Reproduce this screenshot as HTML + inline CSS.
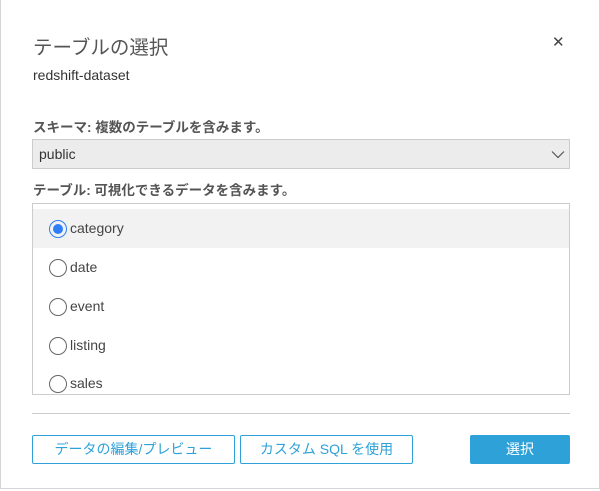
<!DOCTYPE html>
<html><head><meta charset="utf-8"><style>
*{box-sizing:border-box;margin:0;padding:0}
body{width:600px;height:491px;background:#fff;font-family:"Liberation Sans","Noto Sans CJK JP",sans-serif;color:#444;position:relative;overflow:hidden}
.modal{position:absolute;left:0;top:0;width:600px;height:489px;border:1px solid #d5d5d5;border-top:none;background:#fff}
.a{position:absolute}
.title{left:32px;top:31px;font-size:19.5px;color:#555}
.close{left:551px;top:33px;font-size:15px;color:#444}
.sub{left:32px;top:67px;font-size:14px;color:#333}
.lbl{left:32px;font-size:13.5px;font-weight:bold;color:#555}
.sel{left:31px;top:139px;width:538px;height:30px;background:#ececec;border:1px solid #ccc;font-size:14px;color:#333;padding:6px 0 0 6px}
.list{left:31px;top:203px;width:538px;height:192px;border:1px solid #ccc;overflow:hidden}
.row{position:absolute;left:0;width:536px;height:39px}
.radio{position:absolute;left:16px;top:11px;width:18px;height:18px;border:1px solid #666;border-radius:50%}
.rt{position:absolute;left:37px;top:11px;font-size:14px;color:#444}
.hr{left:31px;top:413px;width:538px;height:1px;background:#ccc}
.btn{top:435px;height:29px;border:1px solid #2ea1d9;color:#2ea1d9;font-size:14px;text-align:center;line-height:27px;border-radius:2px}
</style></head><body>
<div class="modal">
<div class="a title">テーブルの選択</div>
<div class="a close">✕</div>
<div class="a sub">redshift-dataset</div>
<div class="a lbl" style="top:116px">スキーマ: 複数のテーブルを含みます。</div>
<div class="a sel">public
<svg class="a" style="left:518px;top:10px" width="14" height="9" viewBox="0 0 14 9"><path d="M1 1.5L7 7.5L13 1.5" fill="none" stroke="#555" stroke-width="1.2"/></svg></div>
<div class="a lbl" style="top:179px">テーブル: 可視化できるデータを含みます。</div>
<div class="a list">
<div class="row" style="top:5px;background:#f2f2f2"><div class="radio" style="border:1.5px solid #2f7ef5"><div style="position:absolute;left:2.5px;top:2.5px;width:10px;height:10px;border-radius:50%;background:#2f7ef5"></div></div><div class="rt">category</div></div>
<div class="row" style="top:44px"><div class="radio"></div><div class="rt">date</div></div>
<div class="row" style="top:83px"><div class="radio"></div><div class="rt">event</div></div>
<div class="row" style="top:122px"><div class="radio"></div><div class="rt">listing</div></div>
<div class="row" style="top:160px"><div class="radio"></div><div class="rt">sales</div></div>
</div>
<div class="a hr"></div>
<div class="a btn" style="left:31px;width:203px">データの編集/プレビュー</div>
<div class="a btn" style="left:239px;width:173px">カスタム SQL を使用</div>
<div class="a btn" style="left:469px;width:100px;background:#2ea1d9;color:#fff">選択</div>
</div>
</body></html>
